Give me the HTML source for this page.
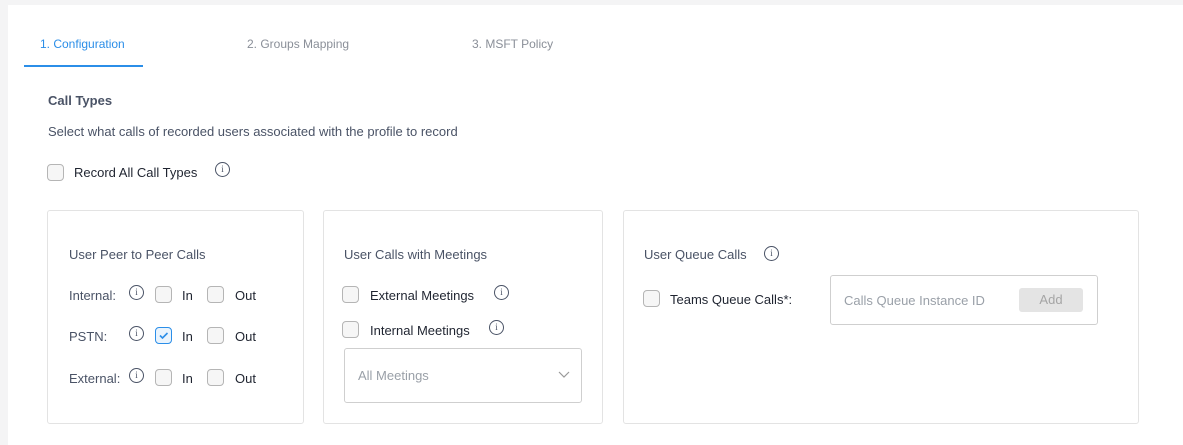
<!DOCTYPE html><html><head><style>
body{margin:0;width:1183px;height:437px;background:#f4f4f5;font-family:"Liberation Sans",sans-serif;position:relative;overflow:hidden}
.card{position:absolute;left:8px;top:5px;width:1175px;height:440px;background:#fff}
.a{position:absolute;white-space:nowrap}
.t{font-size:12px;color:#8a8f98}
.tx{font-size:13px;color:#4a5366}
.dk{font-size:13px;color:#1f2430}
.cb{position:absolute;width:15px;height:15px;border:1px solid #b5b5b5;border-radius:4px;background:#f6f6f6}
.box{position:absolute;border:1px solid #e3e3e3;border-radius:3px;background:#fff}
.i{position:absolute;width:13px;height:13px;border:1px solid #4a5366;border-radius:50%;font-size:9px;color:#4a5366;text-align:center;line-height:13px;font-family:"Liberation Serif",serif}
</style></head><body>
<div class="card"></div>
<div class="a t" style="left:40px;top:37px;color:#2b8ee8">1. Configuration</div>
<div class="a" style="left:24px;top:65px;width:119px;height:2px;background:#2b8ee8"></div>
<div class="a t" style="left:247px;top:37px">2. Groups Mapping</div>
<div class="a t" style="left:472px;top:37px">3. MSFT Policy</div>
<div class="a tx" style="left:48px;top:93px;font-weight:bold">Call Types</div>
<div class="a tx" style="left:48px;top:124px">Select what calls of recorded users associated with the profile to record</div>
<div class="cb" style="left:47px;top:164px"></div>
<div class="a dk" style="left:74px;top:165px">Record All Call Types</div>
<div class="i" style="left:215px;top:162px">i</div>

<div class="box" style="left:47px;top:210px;width:255px;height:212px"></div>
<div class="box" style="left:323px;top:210px;width:278px;height:212px"></div>
<div class="box" style="left:623px;top:210px;width:514px;height:212px"></div>

<div class="a tx" style="left:69px;top:247px">User Peer to Peer Calls</div>
<div class="a tx" style="left:69px;top:288px">Internal:</div>
<div class="i" style="left:129px;top:285px">i</div>
<div class="cb" style="left:155px;top:286px"></div><div class="a dk" style="left:182px;top:288px">In</div>
<div class="cb" style="left:207px;top:286px"></div><div class="a dk" style="left:235px;top:288px">Out</div>
<div class="a tx" style="left:69px;top:329px">PSTN:</div>
<div class="i" style="left:129px;top:326px">i</div>
<div class="cb" style="left:155px;top:327px;border-color:#2b8ee8;background:#eaf4fd"><svg width="15" height="15" style="position:absolute;left:0;top:0"><path d="M4 7.5l2.5 2.5 5-5" stroke="#2b8ee8" stroke-width="1.6" fill="none"/></svg></div>
<div class="a dk" style="left:182px;top:329px">In</div>
<div class="cb" style="left:207px;top:327px"></div><div class="a dk" style="left:235px;top:329px">Out</div>
<div class="a tx" style="left:69px;top:371px">External:</div>
<div class="i" style="left:129px;top:368px">i</div>
<div class="cb" style="left:155px;top:369px"></div><div class="a dk" style="left:182px;top:371px">In</div>
<div class="cb" style="left:207px;top:369px"></div><div class="a dk" style="left:235px;top:371px">Out</div>

<div class="a tx" style="left:344px;top:247px">User Calls with Meetings</div>
<div class="cb" style="left:342px;top:286px"></div><div class="a dk" style="left:370px;top:288px">External Meetings</div>
<div class="i" style="left:494px;top:285px">i</div>
<div class="cb" style="left:342px;top:321px"></div><div class="a dk" style="left:370px;top:323px">Internal Meetings</div>
<div class="i" style="left:489px;top:320px">i</div>
<div class="a" style="left:344px;top:348px;width:236px;height:53px;border:1px solid #cfcfcf;border-radius:3px"></div>
<div class="a" style="left:358px;top:368px;font-size:13px;color:#9aa0a8">All Meetings</div>
<svg class="a" style="left:558px;top:371px" width="12" height="8"><path d="M1 1l5 5 5-5" stroke="#999" fill="none" stroke-width="1.2"/></svg>

<div class="a tx" style="left:644px;top:247px">User Queue Calls</div>
<div class="i" style="left:764px;top:246px">i</div>
<div class="cb" style="left:643px;top:290px"></div><div class="a dk" style="left:670px;top:292px">Teams Queue Calls*:</div>
<div class="a" style="left:830px;top:275px;width:266px;height:48px;border:1px solid #cfcfcf;border-radius:3px"></div>
<div class="a" style="left:844px;top:293px;font-size:13px;color:#9aa0a8">Calls Queue Instance ID</div>
<div class="a" style="left:1019px;top:288px;width:64px;height:24px;background:#e4e4e4;border-radius:3px;font-size:13px;color:#a5a5a5;text-align:center;line-height:24px">Add</div>
</body></html>
